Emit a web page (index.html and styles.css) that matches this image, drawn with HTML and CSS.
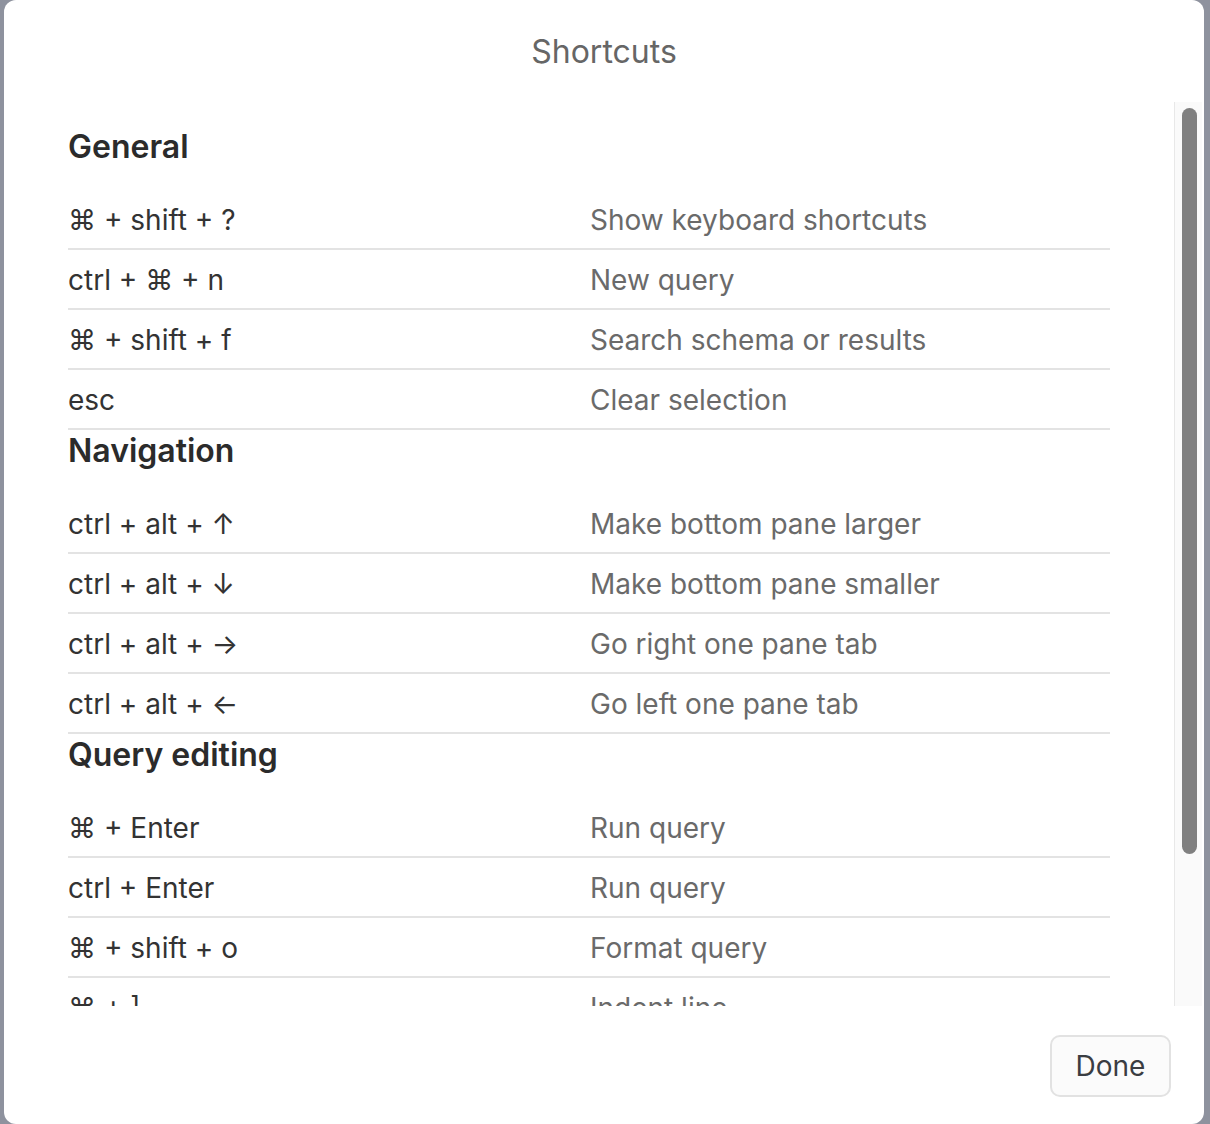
FILE: index.html
```html
<!DOCTYPE html>
<html lang="en">

    <head>
        <meta charset="UTF-8">
        <meta name="viewport" content="width=device-width, initial-scale=1.0">
        <title>Shortcuts</title>
        <link rel="stylesheet" href="styles.css">
    </head>

    <body>
        <div class="modal">
            <h1 class="modal-title">Shortcuts</h1>

            <div class="modal-body">
                <div class="scroll-content">
                    <section class="group">
                        <h2>General</h2>
                        <div class="row"><span class="keys">⌘ + shift + ?</span><span class="desc">Show keyboard shortcuts</span></div>
                        <div class="row"><span class="keys">ctrl + ⌘ + n</span><span class="desc">New query</span></div>
                        <div class="row"><span class="keys">⌘ + shift + f</span><span class="desc">Search schema or results</span></div>
                        <div class="row"><span class="keys">esc</span><span class="desc">Clear selection</span></div>
                    </section>

                    <section class="group">
                        <h2>Navigation</h2>
                        <div class="row"><span class="keys">ctrl + alt + ↑</span><span class="desc">Make bottom pane larger</span></div>
                        <div class="row"><span class="keys">ctrl + alt + ↓</span><span class="desc">Make bottom pane smaller</span></div>
                        <div class="row"><span class="keys">ctrl + alt + →</span><span class="desc">Go right one pane tab</span></div>
                        <div class="row"><span class="keys">ctrl + alt + ←</span><span class="desc">Go left one pane tab</span></div>
                    </section>

                    <section class="group">
                        <h2>Query editing</h2>
                        <div class="row"><span class="keys">⌘ + Enter</span><span class="desc">Run query</span></div>
                        <div class="row"><span class="keys">ctrl + Enter</span><span class="desc">Run query</span></div>
                        <div class="row"><span class="keys">⌘ + shift + o</span><span class="desc">Format query</span></div>
                        <div class="row"><span class="keys">⌘ + ]</span><span class="desc">Indent line</span></div>
                        <div class="row"><span class="keys">⌘ + [</span><span class="desc">Outdent line</span></div>
                        <div class="row"><span class="keys">⌘ + /</span><span class="desc">Toggle comment</span></div>
                    </section>
                </div>

                <div class="scrollbar">
                    <div class="scrollbar-thumb"></div>
                </div>
            </div>

            <div class="modal-footer">
                <button class="btn-done" type="button">Done</button>
            </div>
        </div>
    </body>

</html>
```

FILE: styles.css
```css
html,
body {
    margin: 0;
    height: 100%;
}

body {
    background-color: #8e929e;
    font-family: Inter, "Noto Sans", "DejaVu Sans", sans-serif;
    padding: 0 6px 0 4px;
    box-sizing: border-box;
    overflow: hidden;
}

.modal {
    height: 1124px;
    background-color: #fff;
    border-radius: 12px;
    display: flex;
    flex-direction: column;
    overflow: hidden;
}

.modal-title {
    margin: 0;
    height: 102px;
    padding-top: 31px;
    box-sizing: border-box;
    text-align: center;
    font-size: 32px;
    font-weight: 400;
    line-height: 42px;
    color: #666;
}

.modal-body {
    height: 904px;
    display: flex;
    padding-right: 2px;
}

.scroll-content {
    flex: 1;
    overflow: hidden;
    padding: 24px 64px 0 64px;
}

.scrollbar {
    width: 28px;
    background-color: #fafafa;
    border-left: 1px solid #e8e8e8;
    box-sizing: border-box;
    padding: 6px 5px 0 7px;
}

.scrollbar-thumb {
    height: 746px;
    background-color: #808080;
    border-radius: 8px;
}

.group h2 {
    margin: 0 0 22px 0;
    font-size: 32px;
    font-weight: 600;
    line-height: 42px;
    color: #2b2b2b;
}

.row {
    display: flex;
    align-items: center;
    height: 60px;
    padding-top: 2px;
    box-sizing: border-box;
    border-bottom: 2px solid #e3e3e3;
    font-size: 28px;
}

.keys {
    width: 522px;
    flex-shrink: 0;
    color: #333;
}

.desc {
    color: #6a6a6a;
}

.modal-footer {
    height: 118px;
    display: flex;
    justify-content: flex-end;
    align-items: flex-start;
    padding: 29px 33px 0 0;
    box-sizing: border-box;
}

.btn-done {
    width: 121px;
    height: 62px;
    font-family: inherit;
    font-size: 28px;
    color: #3a3d42;
    background-color: #fbfbfb;
    border: 2px solid #e2e2e2;
    border-radius: 10px;
    cursor: pointer;
}
```
